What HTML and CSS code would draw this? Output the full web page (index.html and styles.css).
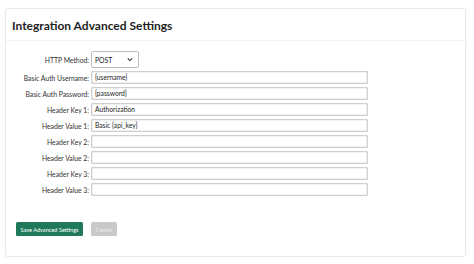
FILE: index.html
```
<!DOCTYPE html>
<html>
<head>
<meta charset="utf-8">
<link rel="stylesheet" href="styles.css">
</head>
<body>
<div class="card">
  <div class="card-header">
    <h1 class="title">Integration Advanced Settings</h1>
  </div>
  <div class="card-body">
    <form class="form">
      <label class="lbl">HTTP Method:</label>
      <div class="field"><div class="select"><span>POST</span><svg class="caret" viewBox="0 0 8 6" width="6" height="5"><path d="M1 1.5 L4 4.5 L7 1.5" fill="none" stroke="#333" stroke-width="1.4"/></svg></div></div>
      <label class="lbl">Basic Auth Username:</label>
      <div class="field"><div class="input">{username}</div></div>
      <label class="lbl">Basic Auth Password:</label>
      <div class="field"><div class="input">{password}</div></div>
      <label class="lbl">Header Key 1:</label>
      <div class="field"><div class="input">Authorization</div></div>
      <label class="lbl">Header Value 1:</label>
      <div class="field"><div class="input">Basic {api_key}</div></div>
      <label class="lbl">Header Key 2:</label>
      <div class="field"><div class="input"></div></div>
      <label class="lbl">Header Value 2:</label>
      <div class="field"><div class="input"></div></div>
      <label class="lbl">Header Key 3:</label>
      <div class="field"><div class="input"></div></div>
      <label class="lbl">Header Value 3:</label>
      <div class="field"><div class="input"></div></div>
    </form>
    <div class="actions">
      <button class="btn btn-save" type="button">Save Advanced Settings</button>
      <button class="btn btn-cancel" type="button">Cancel</button>
    </div>
  </div>
</div>
</body>
</html>
```
FILE: styles.css
```
* { box-sizing: border-box; }
html, body { margin: 0; padding: 0; background: #fff; }
body {
  font-family: Lato, "Open Sans", sans-serif;
  color: #222;
  padding: 8px 0 0 5px;
}
.card {
  width: 461px;
  height: 249px;
  border: 1px solid #e9e9e9;
  border-radius: 3px;
  box-shadow: 0 1px 2px rgba(0,0,0,0.05);
  background: #fff;
}
.card-header {
  height: 32px;
  border-bottom: 1px solid #f1f1f1;
  display: flex;
  align-items: center;
  padding-left: 6px;
  padding-top: 2px;
}
.title {
  margin: 0;
  font-size: 12px;
  font-weight: 700;
  color: #1e1e1e;
  letter-spacing: 0;
}
.card-body {
  padding: 10px 0 0 0;
}
.form {
  display: grid;
  grid-template-columns: 83px 277px;
  column-gap: 2px;
  row-gap: 3px;
  align-items: center;
}
.lbl {
  text-align: right;
  font-size: 6.8px;
  color: #333;
  white-space: nowrap;
}
.field { display: flex; }
.input {
  width: 277px;
  height: 13px;
  border: 1px solid #cfcfcf;
  box-shadow: inset 0 0 0 0.5px #e4e4e4;
  border-radius: 1px;
  font-size: 6.7px;
  line-height: 11px;
  padding-left: 3px;
  color: #222;
}
.select {
  width: 48px;
  height: 17px;
  border: 1px solid #bdbdbd;
  border-radius: 2px;
  display: flex;
  align-items: center;
  justify-content: space-between;
  padding: 0 5px 0 3px;
  font-size: 6.8px;
  color: #222;
}
.actions {
  display: flex;
  gap: 8px;
  padding: 26px 0 0 10px;
}
.btn {
  font-family: Lato, "Open Sans", sans-serif;
  font-size: 5.6px;
  height: 14px;
  border: none;
  border-radius: 1.5px;
  padding: 0;
  color: #fff;
}
.btn-save {
  width: 67px;
  background: #1f7a5b;
}
.btn-cancel {
  width: 26px;
  background: #c9c9c9;
  color: #eee;
}
```
